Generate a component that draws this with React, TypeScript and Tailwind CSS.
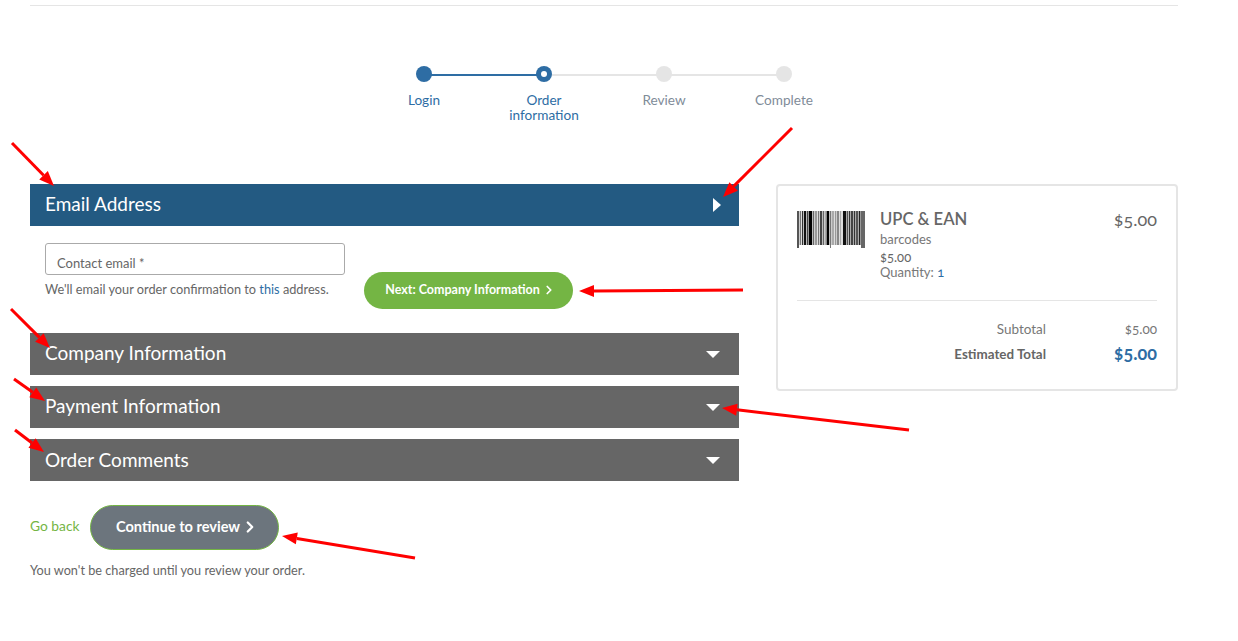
import React from 'react';
import { ChevronRight } from 'lucide-react';

const steps = [
  { label: 'Login', done: true },
  { label: 'Order information', done: true },
  { label: 'Review', done: false },
  { label: 'Complete', done: false },
];

const bars = [
  [0, 2, '#555'], [2, 1, '#ccc'], [3, 1, '#777'], [4, 1, '#ddd'], [5, 1, '#333'], [6, 1, '#bbb'], [7, 2, '#111'], [9, 1, '#bbb'],
  [10, 1, '#444'], [11, 1, '#999'], [12, 3, '#000'], [15, 1, '#bbb'], [16, 1, '#666'], [17, 1, '#ccc'], [18, 2, '#999'], [20, 1, '#ddd'],
  [21, 1, '#777'], [22, 1, '#ccc'], [23, 2, '#444'], [25, 1, '#bbb'], [26, 1, '#666'], [27, 1, '#ccc'], [28, 1, '#aaa'], [29, 1, '#888'],
  [30, 2, '#000'], [32, 1, '#bbb'], [33, 1, '#777'], [34, 1, '#ccc'], [35, 2, '#aaa'], [37, 1, '#ddd'], [38, 1, '#999'], [39, 1, '#ccc'],
  [40, 2, '#888'], [42, 1, '#ddd'], [43, 1, '#aaa'], [44, 2, '#ddd'], [46, 3, '#111'], [49, 1, '#aaa'], [50, 1, '#555'], [51, 1, '#bbb'],
  [52, 1, '#333'], [53, 1, '#aaa'], [54, 2, '#444'], [56, 1, '#aaa'], [57, 1, '#333'], [58, 1, '#aaa'], [59, 2, '#555'], [61, 1, '#aaa'],
  [62, 1, '#222'], [63, 1, '#999'], [64, 4, '#666'],
] as const;

const arrows = [
  [12, 143, 54, 186],
  [792, 128, 723, 197],
  [743, 290, 579, 291],
  [11, 309, 50, 348],
  [14, 379, 45, 401],
  [909, 430, 722, 408],
  [15, 430, 44, 452],
  [415, 558, 282, 536],
];

function Arrow({ line }: { line: number[] }) {
  const [x1, y1, x2, y2] = line;
  const len = Math.hypot(x2 - x1, y2 - y1);
  const ux = (x2 - x1) / len;
  const uy = (y2 - y1) / len;
  const bx = x2 - ux * 15;
  const by = y2 - uy * 15;
  return (
    <g>
      <line x1={x1} y1={y1} x2={bx} y2={by} stroke="#ff0000" strokeWidth={3} />
      <polygon
        points={`${x2},${y2} ${bx - uy * 6},${by + ux * 6} ${bx + uy * 6},${by - ux * 6}`}
        fill="#ff0000"
      />
    </g>
  );
}

function Section({ title }: { title: string }) {
  return (
    <div className="h-[42px] bg-[#666666] flex items-center justify-between pl-[15px] pr-[19px] text-white text-[19px]">
      <span className={title === 'Order Comments' ? 'pb-0' : 'pb-[2px]'}>{title}</span>
      <span className="w-0 h-0 border-x-[7.5px] border-x-transparent border-t-[7px] border-t-white" />
    </div>
  );
}

function Stepper() {
  return (
    <div className="flex justify-center mt-[60px] h-[118px]">
      {steps.map((step, i) => (
        <div key={step.label} className="w-[120px] flex flex-col items-center relative">
          {i < steps.length - 1 && (
            <div className={`absolute top-[8px] left-[60px] w-[120px] h-[2px] ${i === 0 ? 'bg-[#2e6da4]' : 'bg-[#e5e5e5]'}`} />
          )}
          {i === 1 ? (
            <div className="relative w-4 h-4 rounded-full bg-[#2e6da4] flex items-center justify-center">
              <div className="w-1.5 h-1.5 rounded-full bg-white" />
            </div>
          ) : (
            <div className={`relative w-4 h-4 rounded-full ${step.done ? 'bg-[#2e6da4]' : 'bg-[#e5e5e5]'}`} />
          )}
          <div className={`mt-[11px] w-[80px] text-center text-[13.6px] leading-[15px] ${step.done ? 'text-[#2e6da4]' : 'text-[#7f8c99]'}`}>
            {step.label}
          </div>
        </div>
      ))}
    </div>
  );
}

function Summary() {
  return (
    <div className="w-[402px] h-[207px] border-2 border-[#e5e5e5] rounded-[4px] px-[19px] pt-[25px] text-[#666666]">
      <div className="flex h-[90px] border-b border-[#e5e5e5]">
        <svg width="68" height="37" viewBox="0 0 68 37" className="shrink-0">
          {bars.map(([x, w, c]) => (
            <rect key={x} x={x} y={0} width={w} height={x === 0 || x === 33 || x === 64 ? 37 : 34} fill={c} />
          ))}
        </svg>
        <div className="ml-[15px] flex-1 -mt-[3px]">
          <div className="text-[16.6px] leading-[22px] font-semibold">UPC &amp; EAN</div>
          <div className="text-[13px] leading-[17px] mt-[1px] text-[#777777]">barcodes</div>
          <div className="text-[13px] leading-[17px] mt-[1px] oldstyle-nums">$5.00</div>
          <div className="text-[13px] leading-[15px] -mt-[1px] text-[#777777]">
            Quantity: <span className="text-[#2e6da4] oldstyle-nums">1</span>
          </div>
        </div>
        <div className="text-[18px] leading-[24px] -mt-[4px] oldstyle-nums">$5.00</div>
      </div>
      <div className="flex justify-between mt-[19px] text-[13.5px] leading-[18px] text-[#777777]">
        <span className="w-[249px] text-right">Subtotal</span>
        <span className="oldstyle-nums">$5.00</span>
      </div>
      <div className="flex justify-between items-center mt-[4px] h-[24px]">
        <span className="w-[249px] text-right text-[13.4px] font-bold">Estimated Total</span>
        <span className="text-[18px] font-bold text-[#2e6da4] oldstyle-nums pb-[1px]">$5.00</span>
      </div>
    </div>
  );
}

export default function App() {
  return (
    <div className="relative w-[1238px] h-[641px] overflow-hidden bg-white font-[Lato,sans-serif]">
      <div className="mx-[30px] w-[1148px]">
        <div className="h-[6px] border-b border-[#e5e5e5]" />
        <Stepper />
        <div className="flex justify-between">
          <div className="w-[709px]">
            <div className="h-[42px] bg-[#235a82] flex items-center justify-between pl-[15px] pr-[18px] text-white text-[19px]">
              <span className="pb-[2px]">Email Address</span>
              <span className="w-0 h-0 border-y-[7.5px] border-y-transparent border-l-[8px] border-l-white" />
            </div>
            <div className="h-[107px] pl-[15px] pt-[17px] flex">
              <div className="w-[319px]">
                <div className="w-[300px] h-[32px] border border-[#aaaaaa] rounded-[3px] pl-[11px] pt-[11px] text-[13px] leading-[16px] text-[#666666]">
                  Contact email <span className="text-[#666666]">*</span>
                </div>
                <div className="mt-[6px] text-[12.75px] leading-[16px] text-[#666666]">
                  We'll email your order confirmation to <span className="text-[#2e6da4]">this</span> address.
                </div>
              </div>
              <button className="mt-[29px] w-[209px] h-[37px] pb-[1px] pl-[4px] rounded-full bg-[#74b544] text-white text-[12.5px] font-bold flex items-center justify-center gap-[2px]">
                Next: Company Information
                <ChevronRight size={14} strokeWidth={3} />
              </button>
            </div>
            <Section title="Company Information" />
            <div className="mt-[11px]">
              <Section title="Payment Information" />
            </div>
            <div className="mt-[11px]">
              <Section title="Order Comments" />
            </div>
            <div className="flex items-center mt-[24px]">
              <a className="text-[13.8px] text-[#74b544] w-[60px] pb-[2px]">Go back</a>
              <button className="w-[189px] h-[45px] pb-[1px] pl-[6px] rounded-full bg-[#6c757d] border border-[#74b544] text-white text-[14.6px] font-bold flex items-center justify-center gap-[1px]">
                Continue to review
                <ChevronRight size={18} strokeWidth={3} />
              </button>
            </div>
            <p className="mt-[12px] text-[12.7px] leading-[16px] text-[#666666]">You won't be charged until you review your order.</p>
          </div>
          <Summary />
        </div>
      </div>
      <svg className="absolute inset-0 pointer-events-none" width="1238" height="641">
        {arrows.map((line) => (
          <Arrow key={line.join()} line={line} />
        ))}
      </svg>
    </div>
  );
}
